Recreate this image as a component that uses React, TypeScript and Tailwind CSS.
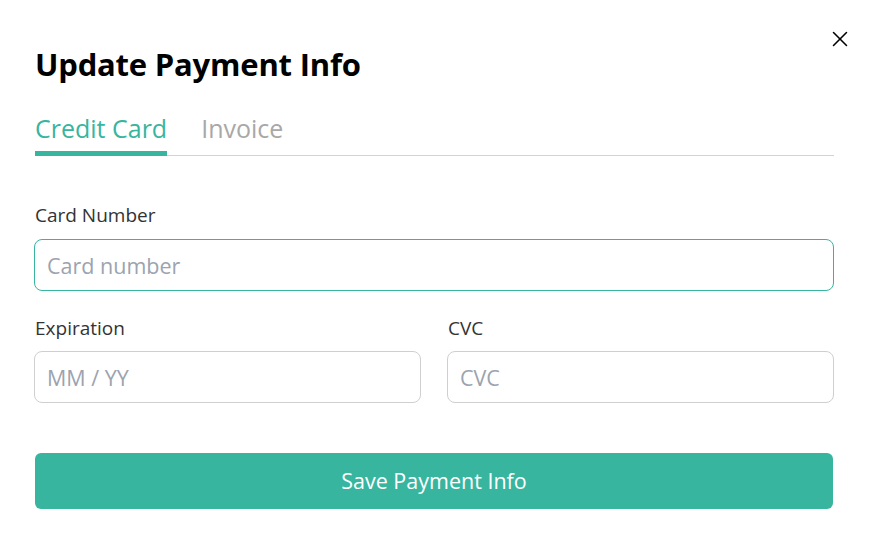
import { X } from "lucide-react";

export default function App() {
  return (
    <div
      className="relative w-[874px] h-[554px] bg-white px-[34px] pt-[40px]"
      style={{ fontFamily: "'Open Sans', 'Noto Sans', sans-serif" }}
    >
      <button className="absolute right-[21px] top-[26px] text-black">
        <X size={26} strokeWidth={1.4} />
      </button>

      <h1 className="text-[31px] leading-[48px] font-bold text-black ml-[1px] tracking-[-0.2px]">Update Payment Info</h1>

      {/* Tabs */}
      <div className="mt-[25px] flex gap-[34px] border-b border-[#d4d4d4] w-[799px] ml-[1px]">
        <div className="border-b-[5px] border-[#38b59f] pb-[8px] -mb-[1px] text-[25px] leading-[30px] text-[#38b59f]">
          Credit Card
        </div>
        <div className="pb-[8px] text-[25px] leading-[30px] text-[#a8a8a8]">Invoice</div>
      </div>

      <div className="mt-[47px]">
        <label className="block text-[19px] leading-[24px] text-[#333] ml-[1px]">Card Number</label>
        <input
          placeholder="Card number"
          className="mt-[12px] block w-[800px] h-[52px] rounded-[8px] border border-[#38b59f] px-[12px] text-[21.5px] text-[#333] outline-none placeholder:text-[#9ca3af]"
        />
      </div>

      <div className="mt-[25px] flex gap-[26px] w-[800px]">
        <div className="flex-1">
          <label className="block text-[19px] leading-[24px] text-[#333] ml-[1px]">Expiration</label>
          <input
            placeholder="MM / YY"
            className="mt-[11px] block w-full h-[52px] rounded-[8px] border border-[#cfcfcf] px-[12px] text-[21.5px] text-[#333] outline-none placeholder:text-[#9ca3af]"
          />
        </div>
        <div className="flex-1">
          <label className="block text-[19px] leading-[24px] text-[#333] ml-[1px]">CVC</label>
          <input
            placeholder="CVC"
            className="mt-[11px] block w-full h-[52px] rounded-[8px] border border-[#cfcfcf] px-[12px] text-[21.5px] text-[#333] outline-none placeholder:text-[#9ca3af]"
          />
        </div>
      </div>

      <button className="mt-[50px] ml-[1px] block w-[798px] h-[56px] rounded-[6px] bg-[#38b59f] text-white text-[21.5px]">
        Save Payment Info
      </button>
    </div>
  );
}
